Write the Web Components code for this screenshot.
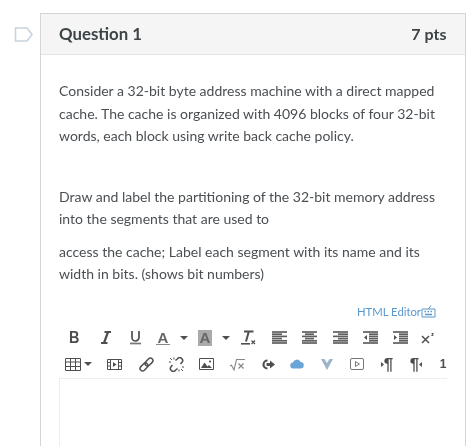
<!DOCTYPE html>
<html><head><meta charset="utf-8"><style>
html,body{margin:0;padding:0;background:#fff;height:446px;overflow:hidden}
body{font-family:Lato,"Open Sans",sans-serif;color:#3d4448}
</style></head><body>
<template id="t-page"><style>
:host{display:flex;align-items:flex-start;padding:13px 4.500px 0 0;height:446px;box-sizing:border-box;overflow:hidden;width:470px;filter:blur(.5px)}
.flag{width:40px;flex:none;display:flex;justify-content:flex-end;padding:14px 6px 0 0;box-sizing:border-box}
</style><div class="flag"><svg width="20" height="15" viewBox="0 0 20 15"><path d="M1.500 1h11.500l5 6.500-5 6.500H1.500z" fill="#fff" stroke="#c9d2de" stroke-width="1.600" stroke-linejoin="round"/></svg></div><slot></slot></template>

<template id="t-card"><style>
:host{display:block;flex:1;min-width:0;border:1px solid #d5d5d5;border-width:1.500px 1.500px 0;height:440px;box-sizing:border-box}
header{display:flex;justify-content:space-between;align-items:center;height:41px;background:#f5f5f5;border-bottom:1.500px solid #e3e3e3;padding:0 18px 2px;box-sizing:border-box;font-size:16px;font-weight:700;color:#3d4448}
.t{font-size:16.800px}
.body{padding:25px 0 0 18px}
</style><header><span class="t"><slot name="title"></slot></span><span><slot name="pts"></slot></span></header><div class="body"><slot></slot></div></template>

<template id="t-para"><style>
:host{display:block;font-size:14px;line-height:22.500px;color:#4a4f53;margin:0 0 10px;width:385px}
</style><slot></slot></template>

<template id="t-editor"><style>
:host{display:block;margin-top:16px}
.link{display:flex;justify-content:flex-end;align-items:center;height:23.500px;padding-bottom:4px;box-sizing:border-box;width:377px;font-size:11.300px;color:#5a97cb}
.rows{display:flex;flex-direction:column}
.area{margin-top:1px;border:1px solid #eee;border-right:0;border-bottom:0;height:80px;width:387px}
</style><div class="link"><span>HTML Editor</span><svg width="15" height="14" viewBox="0 0 15 14" fill="none" stroke="#5a97cb"><path d="M1 5h13v8H1z"/><path d="M7.500 5 10 1.500"/><path d="M3.500 7.500h1.500M6.500 7.500h1.500M9.500 7.500h1.500M4 10.500h7" stroke-width="1.300"/></svg></div><div class="rows"><slot></slot></div><div class="area"></div></template>

<template id="t-row"><style>
:host{display:flex;height:25px;align-items:center;color:#4a4a4a}
:host(#r2){margin-top:1.500px}
</style><slot></slot></template>

<template id="t-tool"><style>
:host{display:flex;align-items:center;justify-content:center;height:25px;flex:none;font:700 14px "Liberation Sans",sans-serif;color:#4d4d4d}
</style><span id="i" style="display:flex;align-items:center"></span></template>

<rce-page>
<q-card>
<span slot="title">Question 1</span><span slot="pts">7 pts</span>
<q-para>Consider a 32-bit byte address machine with a direct mapped<br>cache. The cache is organized with 4096 blocks of four 32-bit<br>words, each block using write back cache policy.</q-para>
<q-para style="margin:38px 0 0;height:0"></q-para>
<q-para style="margin-bottom:10px">Draw and label the partitioning of the 32-bit memory address<br>into the segments that are used to</q-para>
<q-para style="margin-bottom:0">access the cache; Label each segment with its name and its<br>width in bits. (shows bit numbers)</q-para>
<rce-editor>
<rce-row id="r1"></rce-row>
<rce-row id="r2"></rce-row>
</rce-editor>
</q-card>
</rce-page>

<script>
const C='#4f4f4f';
const svg=(w,h,b)=>`<svg width="${w}" height="${h}" viewBox="0 0 ${w} ${h}" fill="none" stroke="${C}">${b}</svg>`;
const caret=`<svg width="8" height="4" viewBox="0 0 8 4"><path d="M0 0h8L4 4z" fill="${C}"/></svg>`;
const bars=(spec)=>svg(15,13,spec.map((s,i)=>`<path d="M${s[0]} ${i*2.200+1}H${s[1]}" stroke-width="1.700" stroke="#5f5f5f"/>`).join('')+(spec.extra||''));
const ind=(p)=>{const a=[[0,15],[6,15],[6,15],[6,15],[6,15],[0,15]];a.extra=`<path d="${p}" fill="${C}" stroke="none"/>`;return bars(a);};
const ic={
 b:`<span style="font-size:17px;font-weight:700;display:block;transform:scaleX(.85)">B</span>`,
 i:svg(10,13,`<path d="M3.500 1H10M0 12h6.500M7 1 3 12" stroke-width="2.200"/>`),
 u:svg(11,14,`<path d="M2 0v6.500a3.500 3.500 0 0 0 7 0V0" stroke-width="1.700"/><path d="M0 12.500h11" stroke="#777" stroke-width="1.700"/>`),
 a:`<span style="display:block;font-size:15px;font-weight:700;border-bottom:1.500px solid #888;padding:0 2px;line-height:13px;color:#666">A</span>`,
 c:caret,
 ab:`<span style="display:block;background:#aaa;font-size:15px;font-weight:700;padding:1px 2px;line-height:14px;color:#666">A</span>`,
 tx:svg(15,15,`<path d="M3 1.500h9.500M7.800 1.500 5 11.500" stroke-width="2"/><path d="M0 13.800h9" stroke-width="1.600"/><path d="M10.500 10.500l3.500 3.500M14 10.500l-3.500 3.500" stroke-width="1.200"/>`),
 al:bars([[0,15],[0,10],[0,15],[0,10],[0,15],[0,15]]),
 ac:bars([[0,15],[3,12],[0,15],[3,12],[0,15],[0,15]]),
 ar:bars([[0,15],[5,15],[0,15],[5,15],[0,15],[0,15]]),
 od:ind('M4 4v5L1 6.500z'),
 in:ind('M1 4v5l3-2.500z'),
 sup:svg(14,12,`<path d="M1 4l7 7M8 4l-7 7" stroke-width="1.500"/><path d="M10.500 1.500h2l-2 2h2" stroke-width=".9"/>`),
 tb:svg(16,13,`<path d="M.5.500h15v12H.500zM.5 4h15M.5 8.500h15M5.500.500v12M10.500.500v12"/>`)+`<span style="width:3px"></span>`+caret,
 md:svg(15,11,`<path d="M.5.500h14v10H.500zM3.500.500v10M11.500.500v10M.5 3.500h3M.5 7h3M11.500 3.500h3M11.500 7h3"/><path d="M6 3v5l3.500-2.500z" fill="${C}" stroke="none"/>`),
 lk:svg(15,15,`<g transform="rotate(-45 7.500 7.500)" stroke-width="1.500"><rect x="-.5" y="5" width="9" height="5" rx="2.500"/><rect x="6.500" y="5" width="9" height="5" rx="2.500"/></g>`),
 ul:svg(15,15,`<g stroke-width="1.500"><path d="M6.500 3.500 8.500 1.800a2.600 2.600 0 0 1 4.500 3.500L11.500 7M8.500 11.500 6.500 13.200a2.600 2.600 0 0 1-4.500-3.500L3.500 8"/><path d="M1 1l2 2M12 12l2 2M5 .5v2M0 5h2M10 12.500v2M13 10h2" stroke-width="1"/></g>`),
 im:svg(15,12,`<path d="M.5.500h14v11H.500z"/><path d="M2 10l3.500-5.500 3 4 1.500-1.500 3 3z" fill="${C}" stroke="none"/><circle cx="11" cy="3.500" r="1.100" fill="${C}" stroke="none"/>`),
 sq:svg(16,13,`<path d="M1 8l1.500-.8L5 12 7.500 1.500H16" stroke="#888" stroke-width="1.100"/><path d="M9.500 5.500l5 5M14.500 5.500l-5 5" stroke="#888" stroke-width="1.200"/>`),
 em:svg(15,13,`<path d="M7.500 2.500A4 4 0 1 0 7.500 10.500" stroke-width="2.200"/><path d="M6.500 5h3.500V2.500L15 6.500l-5 4V8H6.500z" fill="${C}" stroke="none"/>`),
 cl:svg(14,10,`<path d="M3.500 9.500a3 3 0 0 1-.5-6 4 4 0 0 1 7.500-.5 3.200 3.200 0 0 1 0 6.500z" fill="#6aa5d8" stroke="none"/>`),
 v:svg(12,11,`<path d="M0 0l3.500 0L6 4l2.500-4H12L6 11z" fill="#9fb3cd" stroke="none"/>`),
 pl:svg(14,12,`<rect x=".5" y=".5" width="13" height="11" rx="1.500" stroke="#777"/><path d="M5.500 3.500v5L9.500 6z" stroke="#777"/>`),
 p1:`<span style="display:flex;align-items:center">${svg(3,5,`<path d="M0 0v5l3-2.500z" fill="${C}" stroke="none"/>`)}<span style="font-size:17px;line-height:15px">¶</span></span>`,
 p2:`<span style="display:flex;align-items:center"><span style="font-size:17px;line-height:15px">¶</span>${svg(3,5,`<path d="M3 0v5L0 2.500z" fill="${C}" stroke="none"/>`)}</span>`,
 one:`<span style="font-size:12px;font-weight:700">1</span>`
};
function shadow(el,id){el.attachShadow({mode:'open'}).appendChild(document.getElementById(id).content.cloneNode(true));}
const def=(n,id,extra)=>customElements.define(n,class extends HTMLElement{constructor(){super();shadow(this,id);}connectedCallback(){extra&&extra(this);}});
def('rce-page','t-page');def('q-card','t-card');def('q-para','t-para');def('rce-editor','t-editor');def('rce-row','t-row');
def('rce-tool','t-tool',el=>{el.style.width=el.getAttribute('w')+'px';el.shadowRoot.getElementById('i').innerHTML=ic[el.getAttribute('k')];});
const R1=[['b',30],['i',34],['u',24],['a',32],['c',10],['ab',32],['c',10],['tx',34],['al',28],['ac',32],['ar',30],['od',30],['in',30],['sup',26]];
const R2=[['tb',38],['md',35],['lk',28],['ul',32],['im',28],['sq',34],['em',26],['cl',34],['v',26],['pl',34],['p1',26],['p2',32],['one',22]];
const fill=(id,a)=>{const r=document.getElementById(id);a.forEach(([k,w])=>{const t=document.createElement('rce-tool');t.setAttribute('k',k);t.setAttribute('w',w);r.appendChild(t);});};
fill('r1',R1);fill('r2',R2);
</script>
</body></html>
